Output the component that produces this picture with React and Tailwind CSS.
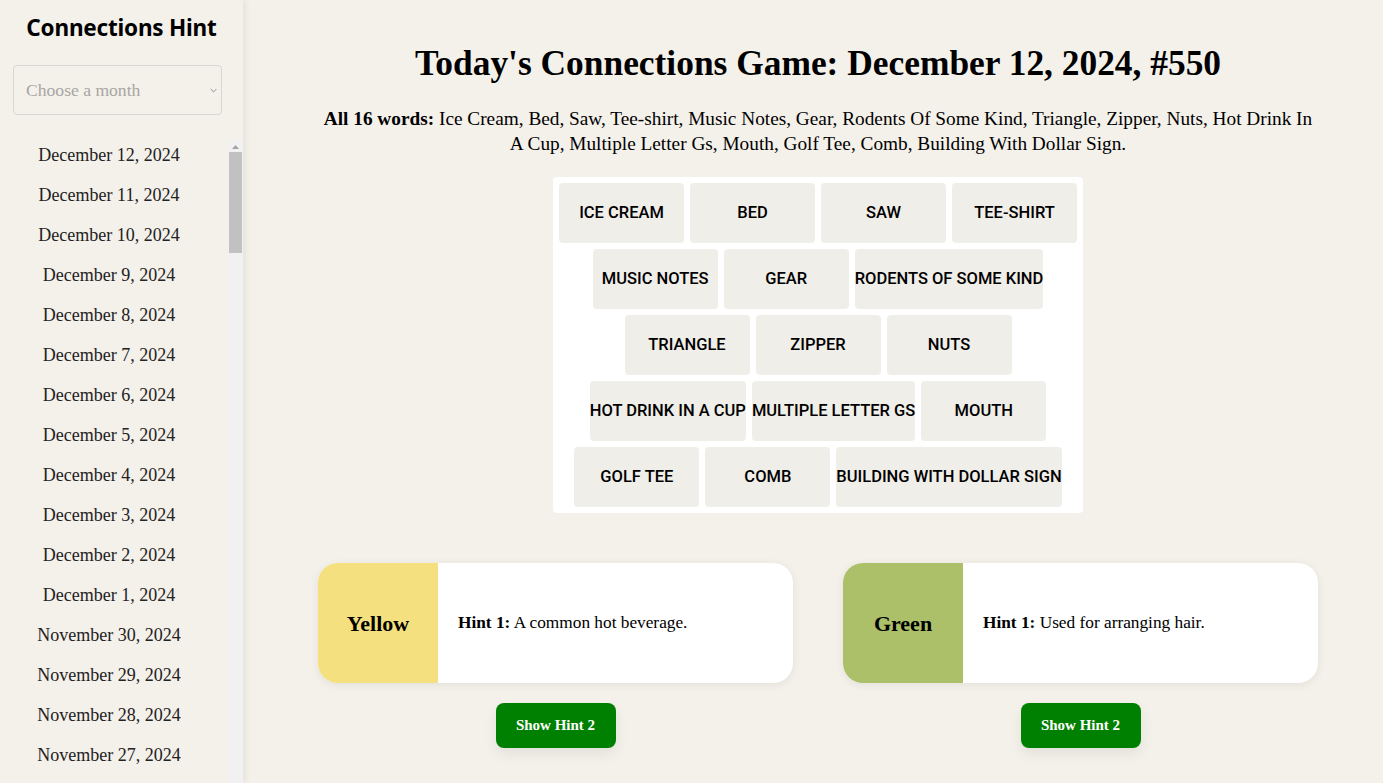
import { useState } from 'react'

const words = [
  'Ice Cream', 'Bed', 'Saw', 'Tee-shirt', 'Music Notes', 'Gear', 'Rodents Of Some Kind', 'Triangle',
  'Zipper', 'Nuts', 'Hot Drink In A Cup', 'Multiple Letter Gs', 'Mouth', 'Golf Tee', 'Comb', 'Building With Dollar Sign',
]

const months = ['January', 'February', 'March', 'April', 'May', 'June', 'July', 'August', 'September', 'October', 'November', 'December']

function buildDates() {
  const out = []
  const d = new Date(2024, 11, 12)
  for (let i = 0; i < 98; i++) {
    out.push(`${months[d.getMonth()]} ${d.getDate()}, ${d.getFullYear()}`)
    d.setDate(d.getDate() - 1)
  }
  return out
}

const dates = buildDates()

const hints = [
  { color: 'Yellow', bg: 'bg-[#f4e07e]', text: 'A common hot beverage.' },
  { color: 'Green', bg: 'bg-[#abc068]', text: 'Used for arranging hair.' },
]

const serif = { fontFamily: '"Liberation Serif", "Times New Roman", serif' }

function App() {
  const [month, setMonth] = useState('')

  return (
    <div className="flex h-screen overflow-hidden bg-[#f4f0ea] text-black" style={serif}>
      <aside className="w-[243px] shrink-0 flex flex-col shadow-[3px_0_6px_rgba(0,0,0,0.06)] relative z-10">
        <h2 className="text-center text-[22.5px] font-bold pt-[11px] h-[52px] tracking-[-0.2px]" style={{ fontFamily: '"Noto Sans", sans-serif' }}>
          Connections Hint
        </h2>
        <div className="pl-[13px] pr-[21px] mt-[13px]">
          <div className="relative">
            <select
              value={month}
              onChange={(e) => setMonth(e.target.value)}
              className="w-full h-[50px] appearance-none bg-transparent border border-[#d9d5d0] rounded-[4px] pl-[12px] text-[17.6px] text-[#a8a6a3]"
              style={serif}
            >
              <option value="">Choose a month</option>
              <option value="2024-12">December 2024</option>
              <option value="2024-11">November 2024</option>
            </select>
            <svg className="absolute right-[5px] top-[22px] w-[7px] h-[7px] pointer-events-none" viewBox="0 0 10 10" fill="none" stroke="#888" strokeWidth="1.4">
              <path d="M1 3l4 4 4-4" />
            </svg>
          </div>
        </div>
        <div className="mt-[25px] flex-1 flex min-h-0">
          <div className="flex-1 overflow-hidden -mt-[5px]">
            {dates.map((d) => (
              <div key={d} className="h-[40px] flex items-center justify-center text-[18px] text-[#222] cursor-pointer pr-[10px]">
                {d}
              </div>
            ))}
          </div>
          <div className="w-[15px] bg-[#f1f1f1] flex flex-col items-center">
            <svg className="w-[7px] h-[4px] mt-[5px]" viewBox="0 0 7 4">
              <path d="M0 4L3.5 0 7 4z" fill="#a3a3a3" />
            </svg>
            <div className="w-[13px] h-[101px] bg-[#c1c1c1] mt-[3px]" />
          </div>
        </div>
      </aside>

      <main className="flex-1 overflow-hidden pl-[10px]">
        <div className="max-w-[1000px] mx-auto">
          <h1 className="text-center text-[35.4px] font-bold mt-[43px] leading-[40px]">
            Today's Connections Game: December 12, 2024, #550
          </h1>
          <p className="text-center text-[19.3px] leading-[25px] mt-[23px] px-[4px]">
            <strong>All 16 words:</strong> {words.join(', ')}.
          </p>

          <div className="mt-[21px] mx-auto w-[530px] bg-white rounded-[4px] p-[6px] flex flex-wrap justify-center gap-[6px]">
            {words.map((w) => (
              <div
                key={w}
                className="min-w-[125px] h-[60px] bg-[#f0eee9] rounded-[4px] flex items-center justify-center uppercase text-[16.5px] font-medium whitespace-nowrap"
                style={{ fontFamily: 'Roboto, sans-serif' }}
              >
                {w}
              </div>
            ))}
          </div>

          <div className="mt-[50px] grid grid-cols-2 gap-[50px]">
            {hints.map((h) => (
              <div key={h.color} className="flex flex-col items-center">
                <div className="w-full h-[120px] flex rounded-[20px] overflow-hidden bg-white shadow-[0_2px_10px_rgba(0,0,0,0.07)]">
                  <div className={`w-[120px] shrink-0 ${h.bg} flex items-center justify-center text-[22px] font-bold`}>
                    {h.color}
                  </div>
                  <div className="flex items-center pl-[20px] text-[17.3px]">
                    <p>
                      <strong>Hint 1:</strong> {h.text}
                    </p>
                  </div>
                </div>
                <button className="mt-[20px] w-[120px] h-[45px] rounded-[8px] bg-[#008000] text-white text-[15px] font-bold shadow-[0_6px_14px_rgba(0,0,0,0.07)]" style={serif}>
                  Show Hint 2
                </button>
              </div>
            ))}
          </div>
        </div>
      </main>
    </div>
  )
}

export default App
